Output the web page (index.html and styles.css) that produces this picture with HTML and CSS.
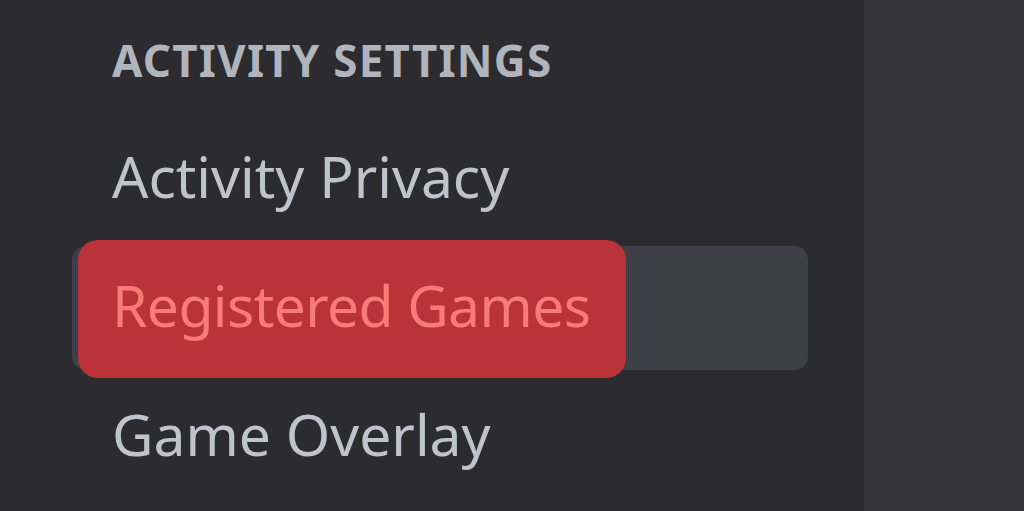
FILE: index.html
```html
<!DOCTYPE html>
<html lang="en">
<head>
    <meta charset="UTF-8">
    <meta name="viewport" content="width=device-width, initial-scale=1.0">
    <title>Activity Settings</title>
    <link rel="stylesheet" href="styles.css">
</head>
<body>
    <div class="layout">
        <nav class="sidebar">
            <h2 class="section-title">Activity Settings</h2>
            <a class="nav-item">Activity Privacy</a>
            <a class="nav-item selected">
                <span class="mark"></span>
                <span class="label">Registered Games</span>
            </a>
            <a class="nav-item">Game Overlay</a>
        </nav>
        <main class="content"></main>
    </div>
</body>
</html>
```

FILE: styles.css
```css
body {
    margin: 0;
    font-family: "Noto Sans", "Open Sans", sans-serif;
    background-color: #2b2b30;
}
.layout {
    display: flex;
    height: 511px;
    overflow: hidden;
}
.sidebar {
    width: 864px;
    flex-shrink: 0;
    box-sizing: border-box;
    padding: 30px 56px 0 72px;
    background-color: #2b2b30;
}
.content {
    flex: 1;
    background-color: #333238;
}
.section-title {
    margin: 0 0 27px 40px;
    font-size: 44px;
    font-weight: 700;
    line-height: 60px;
    letter-spacing: 1.2px;
    text-transform: uppercase;
    color: #b0b5bd;
}
.nav-item {
    position: relative;
    display: flex;
    align-items: center;
    box-sizing: border-box;
    height: 124px;
    margin-bottom: 5px;
    padding: 0 0 6px 40px;
    border-radius: 14px;
    font-size: 57px;
    color: #bfc4cc;
}
.nav-item.selected {
    background-color: #3f4047;
}
.nav-item .label {
    position: relative;
    color: #f87b77;
    letter-spacing: -0.6px;
}
/* red highlight laid over the selected row */
.mark {
    position: absolute;
    left: 6px;
    top: -6px;
    width: 548px;
    height: 138px;
    border-radius: 20px;
    background-color: #b93338;
}
```
